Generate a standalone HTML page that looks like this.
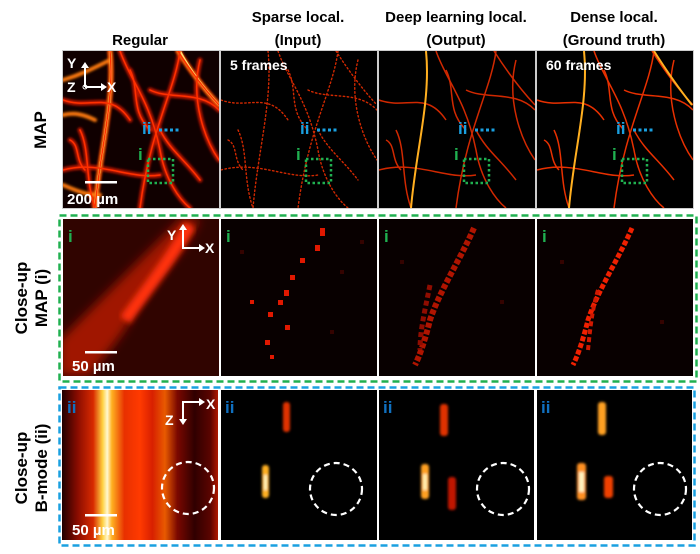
<!DOCTYPE html>
<html><head><meta charset="utf-8"><style>
html,body{margin:0;padding:0;background:#fff;width:700px;height:554px;overflow:hidden}
svg{display:block}
text{font-family:"Liberation Sans",Arial,sans-serif;font-weight:bold}
</style></head><body>
<svg width="700" height="554" viewBox="0 0 700 554" xmlns="http://www.w3.org/2000/svg">
<defs>
<filter id="b1"><feGaussianBlur stdDeviation="1.2"/></filter>
<filter id="b3"><feGaussianBlur stdDeviation="5"/></filter>
<filter id="b6"><feGaussianBlur stdDeviation="3"/></filter>
<linearGradient id="bm" x1="0" x2="1" y1="0" y2="0">
<stop offset="0" stop-color="#200000"/><stop offset="0.1" stop-color="#8a0c00"/>
<stop offset="0.2" stop-color="#d82a00"/><stop offset="0.26" stop-color="#ffd040"/>
<stop offset="0.29" stop-color="#fff8d0"/><stop offset="0.32" stop-color="#ffb020"/>
<stop offset="0.4" stop-color="#e83000"/><stop offset="0.5" stop-color="#ff3a00"/>
<stop offset="0.58" stop-color="#d82000"/><stop offset="0.66" stop-color="#e85a00"/>
<stop offset="0.74" stop-color="#7a0800"/><stop offset="0.85" stop-color="#300000"/>
<stop offset="0.95" stop-color="#5a0400"/><stop offset="1" stop-color="#b01800"/>
</linearGradient>
<clipPath id="c1"><rect x="63" y="51" width="156" height="157"/></clipPath>
<clipPath id="c2"><rect x="63" y="219" width="156" height="157"/></clipPath>
<g id="vs" fill="none">
<path d="M110 51 C115 100 100 150 95 208"/><path d="M180 51 C175 90 150 130 140 208"/><path d="M120 51 C130 80 150 100 160 150 C165 180 180 200 190 208"/><path d="M63 100 C90 110 110 90 130 120"/><path d="M200 60 C190 100 205 140 219 160"/><path d="M178 51 C190 70 205 90 219 105"/><path d="M63 170 C100 160 130 180 160 175"/><path d="M130 70 C140 90 130 110 150 130"/><path d="M160 130 C170 150 185 160 200 180"/><path d="M70 140 C80 145 75 160 85 170"/><path d="M80 130 C90 150 85 180 95 208"/><path d="M150 90 C170 100 200 90 219 110"/>
</g>
</defs>

<text x="140" y="45" font-size="15" text-anchor="middle">Regular</text>
<text x="298" y="22" font-size="15" text-anchor="middle">Sparse local.</text>
<text x="298" y="45" font-size="15" text-anchor="middle">(Input)</text>
<text x="456" y="22" font-size="15" text-anchor="middle">Deep learning local.</text>
<text x="456" y="45" font-size="15" text-anchor="middle">(Output)</text>
<text x="614" y="22" font-size="15" text-anchor="middle">Dense local.</text>
<text x="614" y="45" font-size="15" text-anchor="middle">(Ground truth)</text>

<text transform="translate(46,130) rotate(-90)" font-size="17" text-anchor="middle">MAP</text>
<text transform="translate(27,298) rotate(-90)" font-size="17" text-anchor="middle">Close-up</text>
<text transform="translate(47,298) rotate(-90)" font-size="17" text-anchor="middle">MAP (i)</text>
<text transform="translate(27,468) rotate(-90)" font-size="17" text-anchor="middle">Close-up</text>
<text transform="translate(47,468) rotate(-90)" font-size="17" text-anchor="middle">B-mode (ii)</text>

<!-- ROW 1 -->
<rect x="63" y="51" width="156" height="157" fill="#100000"/>
<g clip-path="url(#c1)" fill="none" stroke-linecap="round">
<use href="#vs" stroke="#c01800" stroke-width="5" filter="url(#b1)"/>
<g stroke="#ff7a10" stroke-width="4" filter="url(#b1)">
<path d="M178 51 C190 70 205 90 219 105"/><path d="M110 51 C115 100 100 150 95 208"/>
<path d="M63 80 C80 75 90 70 110 60"/><path d="M63 115 C75 112 85 115 95 120"/>
<path d="M63 185 C75 190 85 195 100 195"/></g>
<g stroke="#ffe070" stroke-width="2"><path d="M110 51 C115 100 100 150 95 208"/><path d="M180 51 C190 70 205 90 219 105"/></g>
<use href="#vs" stroke="#ff3000" stroke-width="1.5"/>
</g>
<g fill="#000"><rect x="221" y="51" width="156" height="157"/><rect x="379" y="51" width="156" height="157"/><rect x="537" y="51" width="156" height="157"/></g>
<use href="#vs" x="158" stroke="#d02800" stroke-width="1.4" stroke-dasharray="1.5 2.5" stroke-linecap="round"/>
<use href="#vs" x="316" stroke="#d02800" stroke-width="1.5"/>
<use href="#vs" x="474" stroke="#e83000" stroke-width="1.5"/>
<g fill="none" stroke="#ffb020" stroke-width="2"><path d="M426 51 C431 100 416 150 411 208"/><path d="M584 51 C589 100 574 150 569 208"/><path d="M654 51 C666 70 680 90 692 105"/></g>
<text x="67" y="68" font-size="14" fill="#fff">Y</text>
<text x="67" y="92" font-size="14" fill="#fff">Z</text>
<text x="107" y="92" font-size="14" fill="#fff">X</text>
<path d="M85 87 V66 M85 87 H103" stroke="#fff" stroke-width="2" fill="none"/>
<path d="M81 68 L85 62 L89 68Z M101 83 L107 87 L101 91Z" fill="#fff"/>
<circle cx="85" cy="87" r="2" fill="none" stroke="#fff" stroke-width="1"/>
<rect x="85" y="181" width="32" height="2.5" fill="#fff"/>
<text x="67" y="204" font-size="15" fill="#fff">200 µm</text>
<text x="230" y="70" font-size="14" fill="#fff">5 frames</text>
<text x="546" y="70" font-size="14" fill="#fff">60 frames</text>
<g id="ann">
<text x="142" y="134" font-size="17" fill="#1aa0e0">ii</text>
<path d="M159 130 H181" stroke="#1aa0e0" stroke-width="3" stroke-dasharray="3 2.5"/>
<text x="138" y="160" font-size="17" fill="#20b050">i</text>
<rect x="148" y="159" width="25" height="24" fill="none" stroke="#20b050" stroke-width="2.5" stroke-dasharray="2.5 2.5"/>
</g>
<use href="#ann" x="158"/><use href="#ann" x="316"/><use href="#ann" x="474"/>

<!-- ROW 2 -->
<rect x="59.5" y="215.5" width="637" height="166" fill="none" stroke="#20b050" stroke-width="2.5" stroke-dasharray="7 4"/>
<rect x="63" y="219" width="156" height="157" fill="#300400"/>
<g clip-path="url(#c2)">
<path d="M200 219 C180 260 150 280 130 320 C120 340 100 360 90 376 L60 376 L60 340 C90 310 120 280 150 250 C165 235 175 225 180 219Z" fill="#a01400" filter="url(#b3)"/>
<path d="M190 225 C170 260 150 285 125 320" stroke="#ff3010" stroke-width="12" fill="none" filter="url(#b6)"/>
</g>
<g fill="#080000"><rect x="221" y="219" width="156" height="157"/><rect x="379" y="219" width="156" height="157"/><rect x="537" y="219" width="156" height="157"/></g>
<g fill="#e01800">
<rect x="320" y="228" width="5" height="8"/><rect x="315" y="245" width="5" height="6"/><rect x="300" y="258" width="5" height="5"/><rect x="290" y="275" width="5" height="5"/><rect x="284" y="290" width="5" height="6"/><rect x="278" y="300" width="5" height="5"/><rect x="268" y="312" width="5" height="5"/><rect x="285" y="325" width="5" height="5"/><rect x="265" y="340" width="5" height="5"/><rect x="250" y="300" width="4" height="4"/><rect x="270" y="355" width="4" height="4"/>
</g>
<g fill="#400400" opacity="0.8"><rect x="240" y="250" width="4" height="4"/><rect x="340" y="270" width="4" height="4"/><rect x="330" y="330" width="4" height="4"/><rect x="360" y="240" width="4" height="4"/><rect x="400" y="260" width="4" height="4"/><rect x="500" y="300" width="4" height="4"/><rect x="560" y="260" width="4" height="4"/><rect x="660" y="320" width="4" height="4"/></g>
<path d="M474 228 C460 260 440 290 430 320 C425 340 420 355 415 365" stroke="#b01400" stroke-width="6" fill="none" stroke-dasharray="5 2"/>
<path d="M430 285 C425 310 420 330 420 350" stroke="#900c00" stroke-width="5" fill="none" stroke-dasharray="5 3"/>
<path d="M632 228 C618 260 598 290 588 320 C583 340 578 355 573 365" stroke="#f02000" stroke-width="5" fill="none" stroke-dasharray="5 2"/>
<path d="M598 290 C592 310 590 330 588 350" stroke="#d01800" stroke-width="4" fill="none" stroke-dasharray="5 3"/>
<g font-size="17" fill="#20b050"><text x="68" y="242">i</text><text x="226" y="242">i</text><text x="384" y="242">i</text><text x="542" y="242">i</text></g>
<text x="167" y="240" font-size="14" fill="#fff">Y</text><text x="205" y="253" font-size="14" fill="#fff">X</text>
<path d="M183 228 V248 H200" stroke="#fff" stroke-width="2" fill="none"/>
<path d="M179 230 L183 224 L187 230Z M199 244 L205 248 L199 252Z" fill="#fff"/>
<rect x="85" y="351" width="32" height="2.5" fill="#fff"/>
<text x="72" y="371" font-size="15" fill="#fff">50 µm</text>

<!-- ROW 3 -->
<rect x="59.5" y="387.5" width="635" height="158" fill="none" stroke="#1aa0e0" stroke-width="2.5" stroke-dasharray="7 4"/>
<rect x="62" y="390" width="156" height="150" fill="url(#bm)"/>
<g fill="#000"><rect x="221" y="390" width="156" height="150"/><rect x="379" y="390" width="155" height="150"/><rect x="537" y="390" width="155" height="150"/></g>
<g filter="url(#b1)">
<rect x="283" y="402" width="7" height="30" rx="3" fill="#e03000"/>
<rect x="262" y="465" width="7" height="33" rx="3" fill="#ffb020"/><rect x="264" y="475" width="3" height="15" fill="#fff8c0"/>
<rect x="440" y="404" width="8" height="32" rx="3" fill="#e03000"/>
<rect x="421" y="464" width="8" height="35" rx="3" fill="#ffa020"/><rect x="423" y="474" width="4" height="16" fill="#fff0b0"/>
<rect x="448" y="477" width="8" height="33" rx="3" fill="#c01800"/>
<rect x="598" y="402" width="8" height="33" rx="3" fill="#ffa020"/>
<rect x="577" y="463" width="9" height="37" rx="3" fill="#ff9020"/><rect x="579" y="472" width="5" height="20" fill="#fff4c0"/>
<rect x="604" y="476" width="9" height="22" rx="3" fill="#f04000"/>
</g>
<g fill="none" stroke="#fff" stroke-width="2.2" stroke-dasharray="6 4">
<circle cx="188" cy="488" r="26"/><circle cx="336" cy="489" r="26"/><circle cx="503" cy="489" r="26"/><circle cx="660" cy="489" r="26"/>
</g>
<g font-size="17" fill="#1070c0"><text x="67" y="413">ii</text><text x="225" y="413">ii</text><text x="383" y="413">ii</text><text x="541" y="413">ii</text></g>
<path d="M183 421 V402 H200" stroke="#fff" stroke-width="2" fill="none"/>
<path d="M179 419 L183 425 L187 419Z M199 398 L205 402 L199 406Z" fill="#fff"/>
<text x="206" y="409" font-size="14" fill="#fff">X</text><text x="165" y="425" font-size="14" fill="#fff">Z</text>
<rect x="85" y="514" width="32" height="2.5" fill="#fff"/>
<text x="72" y="535" font-size="15" fill="#fff">50 µm</text>

<g fill="none" stroke="#ccc" stroke-width="1">
<rect x="62.5" y="50.5" width="157" height="158"/><rect x="220.5" y="50.5" width="157" height="158"/><rect x="378.5" y="50.5" width="157" height="158"/><rect x="536.5" y="50.5" width="157" height="158"/>
</g>
</svg>
</body></html>
